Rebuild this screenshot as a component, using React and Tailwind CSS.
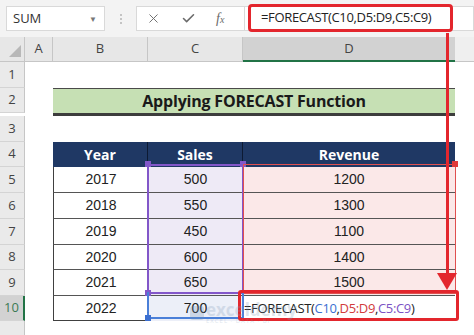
import React from "react";
import { X, Check } from "lucide-react";

const rowHeights = [26, 25, 26, 25, 26, 26, 26, 25, 26, 25];

const data = [
  { year: "2017", sales: "500", revenue: "1200" },
  { year: "2018", sales: "550", revenue: "1300" },
  { year: "2019", sales: "450", revenue: "1100" },
  { year: "2020", sales: "600", revenue: "1400" },
  { year: "2021", sales: "650", revenue: "1500" },
];

const cellFont = "font-['Liberation_Sans',Arial,sans-serif]";

const FormulaBar = () => (
  <div className="h-[37px] bg-[#f3f3f3] flex items-center relative">
    <div className="ml-[6px] w-[99px] h-[25px] bg-white border border-[#d9d9d9] flex items-center justify-between pl-[6px] pr-[7px] text-[13px] text-[#333] font-['Open_Sans',sans-serif]">
      <span>SUM</span>
      <span className="text-[8px] text-[#777]">▼</span>
    </div>
    <div className="w-[31px] flex flex-col items-center gap-[2px]">
      <span className="w-[2px] h-[2px] bg-[#c4c4c4]" />
      <span className="w-[2px] h-[2px] bg-[#c4c4c4]" />
      <span className="w-[2px] h-[2px] bg-[#c4c4c4]" />
    </div>
    <div className="w-[108px] h-[25px] bg-white border border-[#d9d9d9] border-r-0 flex items-center pl-[9px] gap-[20px] text-[#6b6b6b]">
      <X size={15} strokeWidth={1.5} />
      <Check size={15} strokeWidth={2.5} />
      <span className="font-['Liberation_Serif',serif] italic text-[14px] leading-none">
        f<span className="text-[10px]">x</span>
      </span>
    </div>
    <div className="flex-1 h-[25px] bg-white border border-[#d9d9d9] relative">
      <div className="absolute left-[3px] top-[-3px] w-[205px] h-[28px] border-[3px] border-[#e3262d] rounded-[4px] flex items-center pl-[10px] text-[13px] text-[#222] font-['Open_Sans',sans-serif] tracking-[-0.35px] whitespace-nowrap">
        =FORECAST(C10,D5:D9,C5:C9)
      </div>
    </div>
  </div>
);

const ColumnHeaders = () => (
  <div className="grid grid-cols-[25px_28px_95px_95px_212px_1fr] h-[25px] bg-[#e7e7e7] text-[13px] text-[#444] font-['Open_Sans',sans-serif]">
    <div className="border-r border-b border-[#c6c6c6] relative">
      <div className="absolute right-[3px] bottom-[4px] w-0 h-0 border-l-[12px] border-l-transparent border-b-[12px] border-b-[#b8b8b8]" />
    </div>
    <div className="border-r border-b border-[#c6c6c6] flex items-center justify-center">A</div>
    <div className="border-r border-b border-[#c6c6c6] flex items-center justify-center">B</div>
    <div className="border-r border-b border-[#c6c6c6] flex items-center justify-center">C</div>
    <div className="bg-[#d2d2d2] border-b-2 border-[#217346] flex items-center justify-center">D</div>
    <div className="bg-[#efefef] border-b border-[#c6c6c6]" />
  </div>
);

const RowHeader = ({ n, h, active }) => (
  <div
    className={`flex items-center justify-center text-[13px] font-['Open_Sans',sans-serif] border-b border-[#d4d4d4] ${
      active
        ? "bg-[#d2d2d2] text-[#3c7a55] border-r-2 border-r-[#217346]"
        : "bg-[#eaeaea] text-[#444] border-r border-r-[#c6c6c6]"
    }`}
    style={{ height: h }}
  >
    {n}
  </div>
);

const Handle = ({ className }) => (
  <div className={`absolute w-[6px] h-[6px] ${className}`} />
);

const FormulaText = () => (
  <span className="font-['Open_Sans',sans-serif] text-[13px] tracking-[-0.35px] text-[#222]">
    =FORECAST(<span className="text-[#3b6fd1]">C10</span>,
    <span className="text-[#d23b3b]">D5:D9</span>,
    <span className="text-[#7b52c4]">C5:C9</span>)
  </span>
);

const Sheet = () => {
  const cell = "flex items-center justify-center";
  return (
    <div className="relative">
      <ColumnHeaders />
      <div className="grid grid-cols-[25px_28px_95px_95px_212px_1fr]">
        {/* row 1 */}
        <RowHeader n={1} h={rowHeights[0]} />
        <div className="col-span-5 bg-white" />
        {/* row 2 title */}
        <RowHeader n={2} h={rowHeights[1]} />
        <div className="bg-white" />
        <div className={`col-span-3 ${cell} bg-[#c6e0b4] border-t border-[#4a4a4a] border-b-[3px] border-b-[#3d3d3d] font-['Open_Sans',sans-serif] font-bold text-[16px] text-[#1a1a1a] tracking-[-0.2px]`}>
          Applying FORECAST Function
        </div>
        <div className="bg-white" />
        {/* row 3 */}
        <RowHeader n={3} h={rowHeights[2]} />
        <div className="col-span-5 bg-white" />
        {/* row 4 header */}
        <RowHeader n={4} h={rowHeights[3]} />
        <div className="bg-white" />
        <div className={`${cell} bg-[#1f3864] border-r border-[#0d1a33] text-white font-bold text-[14px] font-['Open_Sans',sans-serif]`}>Year</div>
        <div className={`${cell} bg-[#1f3864] border-r border-[#0d1a33] text-white font-bold text-[14px] font-['Open_Sans',sans-serif]`}>Sales</div>
        <div className={`${cell} bg-[#1f3864] text-white font-bold text-[14px] font-['Open_Sans',sans-serif]`}>Revenue</div>
        <div className="bg-white" />
        {/* data rows */}
        {data.map((d, i) => (
          <React.Fragment key={d.year}>
            <RowHeader n={5 + i} h={rowHeights[4 + i]} />
            <div className="bg-white" />
            <div className={`${cell} bg-white border-l border-[#404040] border-b border-b-[#555] text-[14px] text-[#222] ${cellFont}`}>{d.year}</div>
            <div className={`${cell} bg-[#eeeaf6] border-b border-b-[#555] text-[14px] text-[#222] ${cellFont}`}>{d.sales}</div>
            <div className={`${cell} bg-[#fbe8e8] border-b border-b-[#555] text-[14px] text-[#222] ${cellFont}`}>{d.revenue}</div>
            <div className="bg-white" />
          </React.Fragment>
        ))}
        {/* row 10 */}
        <RowHeader n={10} h={rowHeights[9]} active />
        <div className="bg-white" />
        <div className={`${cell} bg-white border-l border-[#404040] border-b border-b-[#404040] text-[14px] text-[#222] ${cellFont}`}>2022</div>
        <div className={`${cell} bg-[#eceff8] text-[14px] text-[#222] ${cellFont}`}>700</div>
        <div className="bg-white flex items-center pl-[1px] whitespace-nowrap">
          <FormulaText />
        </div>
        <div className="bg-white" />
        {/* row 11, cut by the window */}
        <RowHeader n="" h={26} />
        <div className="col-span-5 bg-white" />
      </div>

      {/* selection: C5:C9 purple */}
      <div className="absolute left-[147px] top-[127px] w-[97px] h-[130px] border-2 border-[#8257c9] pointer-events-none" />
      <Handle className="left-[145px] top-[124px] bg-[#8257c9]" />
      <Handle className="left-[240px] top-[124px] bg-[#8257c9]" />
      <Handle className="left-[145px] top-[253px] bg-[#8257c9]" />
      {/* selection: D5:D9 red */}
      <div className="absolute left-[243px] top-[127px] w-[213px] h-[130px] border border-[#e05050] pointer-events-none" />
      <Handle className="left-[452px] top-[124px] bg-[#e03a3a]" />
      {/* selection: C10 blue */}
      <div className="absolute left-[147px] top-[255px] w-[97px] h-[27px] border-2 border-[#4a7fd8] border-t-0 pointer-events-none" />
      <Handle className="left-[145px] top-[278px] bg-[#3b6fd1]" />

      {/* annotation: red box around D10 */}
      <div className="absolute left-[238px] top-[253px] w-[221px] h-[31px] border-[3px] border-[#e3262d] rounded-[3px] pointer-events-none" />
      {/* annotation: red arrow line */}
      <div className="absolute left-[446px] top-[-4px] w-[3px] h-[242px] bg-[#e3262d]" />
      <div className="absolute left-[437px] top-[236px] w-0 h-0 border-l-[10.5px] border-r-[10.5px] border-l-transparent border-r-transparent border-t-[17px] border-t-[#e3262d]" />

      {/* watermark */}
      <div className="absolute left-[190px] top-[264px] flex items-center gap-[2px] opacity-25 pointer-events-none">
        <div className="w-[14px] h-[14px] rounded-[3px] bg-[#6c8fb3]" />
        <div className="flex flex-col leading-none">
          <span className="text-[17px] font-bold text-[#7e9ab8] font-['Open_Sans',sans-serif]">exceldemy</span>
          <span className="text-[6px] text-[#7e9ab8] tracking-[1px] font-['Open_Sans',sans-serif]">EXCEL · DATA · BI</span>
        </div>
      </div>
    </div>
  );
};

export default function App() {
  return (
    <div className="w-[474px] h-[335px] overflow-hidden bg-white">
      <FormulaBar />
      <Sheet />
    </div>
  );
}
